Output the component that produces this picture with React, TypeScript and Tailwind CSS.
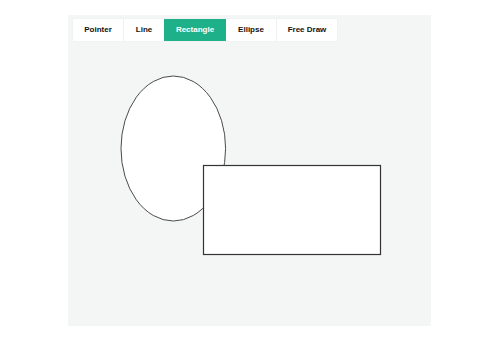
import React, { useState } from 'react';

type Tool = 'pointer' | 'line' | 'rectangle' | 'ellipse' | 'freedraw';

const tools: { id: Tool; label: string; width: string }[] = [
    { id: 'pointer', label: 'Pointer', width: 'w-[50px]' },
    { id: 'line', label: 'Line', width: 'w-[41px]' },
    { id: 'rectangle', label: 'Rectangle', width: 'w-[62px]' },
    { id: 'ellipse', label: 'Ellipse', width: 'w-[50px]' },
    { id: 'freedraw', label: 'Free Draw', width: 'w-[61px]' },
];

const App: React.FC = () => {
    const [tool, setTool] = useState<Tool>('rectangle');

    return (
        <div className="min-h-screen bg-white pt-[15px] font-['Liberation_Sans',Arial,sans-serif]">
            <div className="relative ml-[68px] w-[363px] h-[311px] bg-[#f3f6f5]">
                <svg width="363" height="311" className="block">
                    <ellipse cx="105.3" cy="133.5" rx="52.3" ry="72.5" fill="#ffffff" stroke="#4a4a4a" strokeWidth="1" />
                    <rect x="135.5" y="150.5" width="177" height="89" fill="#ffffff" stroke="#333333" strokeWidth="1.2" />
                </svg>
                <div className="absolute left-[5px] top-[4px] flex h-[22px] bg-white shadow-[0_0_1px_rgba(0,0,0,0.08)]">
                    {tools.map((t, i) => (
                        <button
                            key={t.id}
                            onClick={() => setTool(t.id)}
                            className={`${t.width} h-full text-center text-[8px] font-bold leading-none ${
                                tool === t.id
                                    ? 'bg-[#1eb089] text-white'
                                    : 'bg-white text-[#111111]'
                            } ${i > 0 && tool !== t.id && tools[i - 1].id !== tool ? 'border-l border-[#efefef]' : ''}`}
                        >
                            {t.label}
                        </button>
                    ))}
                </div>
            </div>
        </div>
    );
};

export default App;
